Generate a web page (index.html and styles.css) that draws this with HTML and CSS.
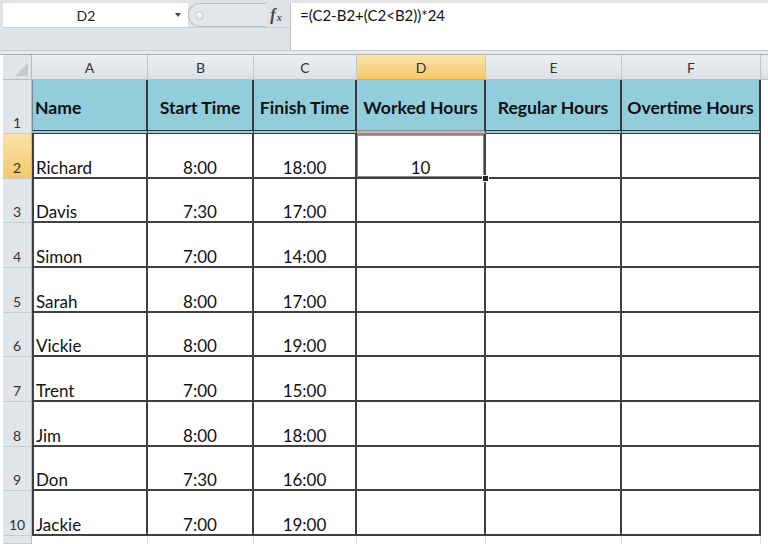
FILE: index.html
```html
<!DOCTYPE html>
<html>
<head>
<meta charset="utf-8">
<link rel="stylesheet" href="styles.css">
</head>
<body>
<div class="app">
  <div class="topstrip"></div>
  <div class="fbar">
    <div class="fleft">
      <div class="frow">
        <div class="namebox"><span class="nbtext">D2</span><span class="tri"></span></div>
        <div class="capsule"><span class="knob"></span></div>
        <div class="fx"><i class="f">f</i><i class="xs">x</i></div>
      </div>
      <div class="fbelow"></div>
    </div>
    <div class="finput">=(C2-B2+(C2&lt;B2))*24</div>
  </div>
  <div class="sep"></div>
  <div class="sheet">
    <div class="corner"><span class="tri2"></span></div>
    <div class="ch">A</div><div class="ch">B</div><div class="ch">C</div><div class="ch sel">D</div><div class="ch">E</div><div class="ch">F</div><div class="ch last"></div>

    <div class="rh">1</div>
    <div class="hd l first">Name</div><div class="hd">Start Time</div><div class="hd">Finish Time</div><div class="hd dsel">Worked Hours</div><div class="hd">Regular Hours</div><div class="hd">Overtime Hours</div><div class="x"></div>

    <div class="rh sel">2</div>
    <div class="c l first">Richard</div><div class="c">8:00</div><div class="c">18:00</div><div class="c active">10<span class="handle"></span></div><div class="c"></div><div class="c"></div><div class="x"></div>

    <div class="rh">3</div>
    <div class="c l first">Davis</div><div class="c">7:30</div><div class="c">17:00</div><div class="c"></div><div class="c"></div><div class="c"></div><div class="x"></div>

    <div class="rh">4</div>
    <div class="c l first">Simon</div><div class="c">7:00</div><div class="c">14:00</div><div class="c"></div><div class="c"></div><div class="c"></div><div class="x"></div>

    <div class="rh">5</div>
    <div class="c l first">Sarah</div><div class="c">8:00</div><div class="c">17:00</div><div class="c"></div><div class="c"></div><div class="c"></div><div class="x"></div>

    <div class="rh">6</div>
    <div class="c l first">Vickie</div><div class="c">8:00</div><div class="c">19:00</div><div class="c"></div><div class="c"></div><div class="c"></div><div class="x"></div>

    <div class="rh">7</div>
    <div class="c l first">Trent</div><div class="c">7:00</div><div class="c">15:00</div><div class="c"></div><div class="c"></div><div class="c"></div><div class="x"></div>

    <div class="rh">8</div>
    <div class="c l first">Jim</div><div class="c">8:00</div><div class="c">18:00</div><div class="c"></div><div class="c"></div><div class="c"></div><div class="x"></div>

    <div class="rh">9</div>
    <div class="c l first">Don</div><div class="c">7:30</div><div class="c">16:00</div><div class="c"></div><div class="c"></div><div class="c"></div><div class="x"></div>

    <div class="rh">10</div>
    <div class="c l first">Jackie</div><div class="c">7:00</div><div class="c">19:00</div><div class="c"></div><div class="c"></div><div class="c"></div><div class="x"></div>

    <div class="rh"></div>
    <div class="g"></div><div class="g"></div><div class="g"></div><div class="g"></div><div class="g"></div><div class="g"></div><div class="x"></div>
  </div>
</div>
</body>
</html>
```
FILE: styles.css
```css
* { box-sizing: border-box; }
html, body { margin: 0; padding: 0; }
body {
  width: 768px;
  height: 544px;
  overflow: hidden;
  background: #ffffff;
  font-family: Lato, "Open Sans", sans-serif;
  color: #111;
}
.app { width: 768px; height: 544px; display: flex; flex-direction: column; }

.topstrip { height: 3px; background: #dfe2e7; }

.fbar { height: 47px; display: flex; background: #dfe2e7; padding-left: 3px; }
.fleft { width: 287px; display: flex; flex-direction: column; }
.frow { height: 24px; display: flex; }
.namebox {
  width: 185px; background: #fff; display: flex; align-items: center;
  font-size: 14px; color: #222;
}
.nbtext { flex: 1; text-align: center; }
.tri {
  width: 0; height: 0; margin: 0 7px 0 6px;
  border-left: 3.5px solid transparent; border-right: 3.5px solid transparent;
  border-top: 4px solid #444;
}
.capsule {
  width: 78px; background: #e3e6ea;
  border: 1px solid #b9bec6; border-right: none;
  border-radius: 12px 0 0 12px;
  display: flex; align-items: center; padding-left: 6px;
}
.knob {
  width: 9px; height: 9px; border-radius: 50%;
  background: radial-gradient(circle at 40% 35%, #ffffff, #d2d6dc);
  border: 1px solid #c8ccd2;
}
.fx {
  flex: 1; display: flex; align-items: center; justify-content: center;
  font-family: "Liberation Serif", serif; color: #444; font-weight: bold;
  padding-right: 4px;
}
.fx .f { font-size: 16px; }
.fx .xs { font-size: 10px; margin-top: 5px; margin-left: 1px; }
.fbelow { flex: 1; background: #dfe2e7; border-top: 1px solid #c9ced5; }
.finput {
  flex: 1; background: #fff; border-left: 1px solid #b9bec6;
  padding: 3px 0 0 9px; font-size: 15px; color: #111;
}

.sep { height: 5px; background: #e8ebee; border-top: 1px solid #c4c9cf; border-bottom: 1px solid #aab0b8; }

.sheet {
  flex: 1;
  display: grid;
  padding-left: 3px;
  grid-template-columns: 29px 116px 106px 103px 129px 136px 139px 1fr;
  grid-template-rows: 25px 54px repeat(9, 44.67px) 1fr;
}

.corner {
  background: #e1e4e9; border-right: 1px solid #b6bcc4; border-bottom: 1px solid #b6bcc4;
  position: relative;
}
.tri2 {
  position: absolute; right: 3px; bottom: 3px; width: 0; height: 0;
  border-left: 13px solid transparent; border-bottom: 13px solid #c5cad1;
}
.ch {
  background: linear-gradient(#eceef1, #dde1e6);
  border-right: 1px solid #c2c7ce; border-bottom: 1px solid #b6bcc4;
  display: flex; align-items: center; justify-content: center;
  font-size: 14px; color: #333;
}
.ch.sel { background: linear-gradient(#fbe3ae, #f3c86b); border-bottom-color: #e0aa40; }
.ch.last { border-right: none; }

.rh {
  background: #e1e4e9; border-right: 1px solid #b6bcc4; border-bottom: 1px solid #c6cbd2;
  display: flex; align-items: flex-end; justify-content: center;
  font-size: 14px; color: #333; padding-bottom: 1px; line-height: 18px;
}
.rh.sel { background: linear-gradient(#fbe1a8, #f3c86b); }

.hd {
  background: #92cddc;
  border-right: 2px solid #3a3a3a; border-bottom: 4px double #383838;
  display: flex; align-items: center; justify-content: center;
  font-weight: bold; font-size: 17.6px; padding-top: 5px; white-space: nowrap;
}
.hd.l { justify-content: flex-start; padding-left: 2px; }
.hd.dsel { border-bottom-color: #b8786c; }

.c {
  border-right: 2px solid #404040; border-bottom: 2px solid #404040;
  display: flex; align-items: flex-end; justify-content: center;
  font-size: 17px; line-height: 18px; padding-bottom: 0;
}
.c.l { justify-content: flex-start; padding-left: 2px; }
.first { border-left: 2px solid #404040; }
.hd.first { border-left: 1px solid #6f8f98; }
.c.active { position: relative; box-shadow: inset 0 0 0 1px #8a8a8a, inset 0 2px 0 #c98a80; }
.handle {
  position: absolute; right: -5px; bottom: -5px; width: 7px; height: 7px;
  background: #222; border: 1px solid #fff; z-index: 2;
}

.x { background: #fff; }
.g { border-right: 1px solid #dadcdf; }
```
